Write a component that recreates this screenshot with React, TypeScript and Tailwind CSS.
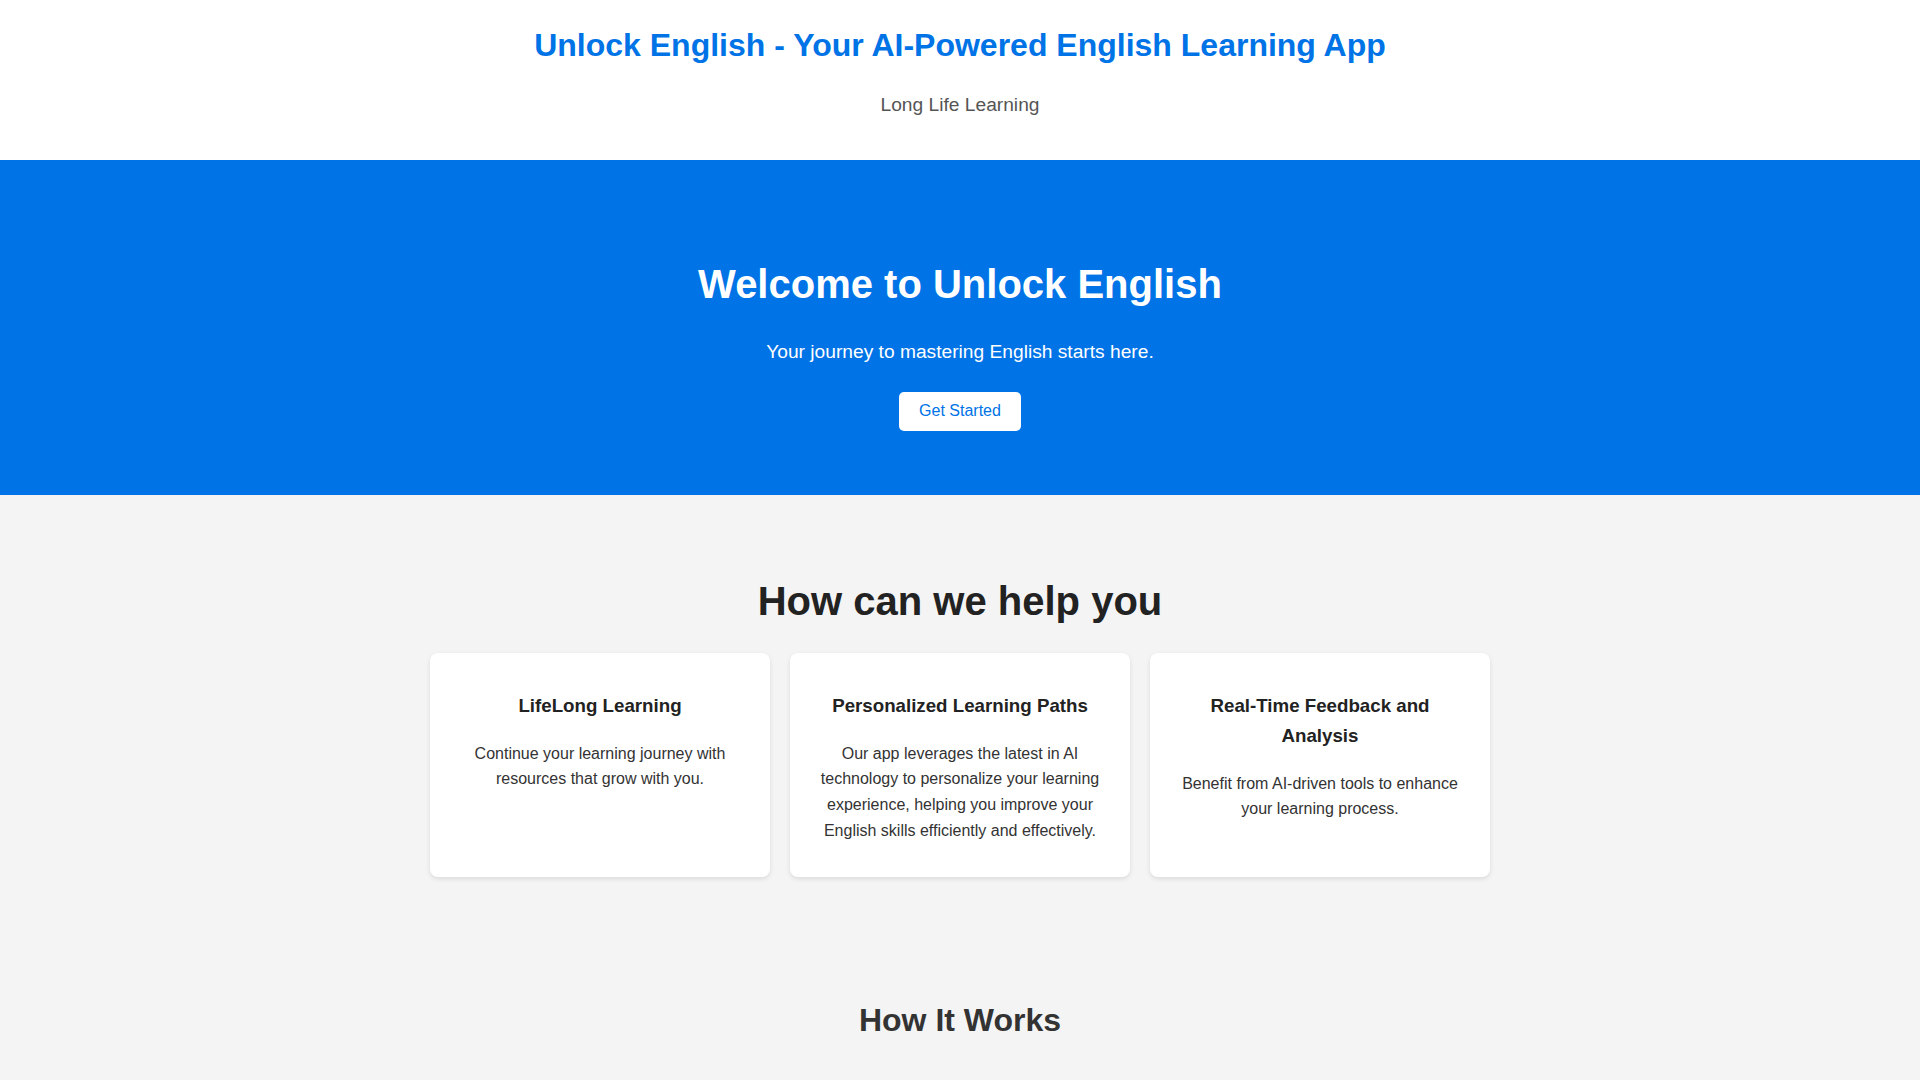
import React from "react";

const cards = [
  {
    title: "LifeLong Learning",
    text: "Continue your learning journey with resources that grow with you.",
  },
  {
    title: "Personalized Learning Paths",
    text: "Our app leverages the latest in AI technology to personalize your learning experience, helping you improve your English skills efficiently and effectively.",
  },
  {
    title: "Real-Time Feedback and Analysis",
    text: "Benefit from AI-driven tools to enhance your learning process.",
  },
];

export default function App() {
  return (
    <div
      className="min-h-screen bg-[#f4f4f4] text-[#333] leading-[1.6]"
      style={{ fontFamily: '"Liberation Sans", Arial, sans-serif' }}
    >
      <header className="bg-white text-center pt-[20px] pb-[20px]">
        <h1 className="text-[32px] font-bold text-[#0073e6] m-0 leading-[1.6]">
          Unlock English - Your AI-Powered English Learning App
        </h1>
        <p className="text-[19.2px] text-[#555] mt-[19px] mb-[19px]">Long Life Learning</p>
      </header>

      <section className="bg-[#0073e6] text-white text-center pt-[92px] pb-[64px]">
        <h2 className="text-[40px] font-bold leading-[1.6] m-0">Welcome to Unlock English</h2>
        <p className="text-[19.2px] mt-[21.5px] mb-[24px]">Your journey to mastering English starts here.</p>
        <div className="flex justify-center">
          <button className="bg-white text-[#0073e6] text-[16px] px-[20px] py-[10px] rounded-[5px] leading-[1.15] whitespace-nowrap">
            Get Started
          </button>
        </div>
      </section>

      <section className="text-center pt-[74px] pb-[20px]">
        <h2 className="text-[40px] font-bold text-[#222] leading-[1.6] m-0 mb-[20px]">
          How can we help you
        </h2>
        <div className="flex justify-center gap-[20px]">
          {cards.map((c) => (
            <div
              key={c.title}
              className="w-[340px] bg-white rounded-[8px] shadow-[0_2px_5px_rgba(0,0,0,0.1)] px-[20px] pt-[21px] pb-[18px]"
            >
              <h3 className="text-[18.72px] font-bold text-[#222] leading-[1.6] mt-[17.8px] mb-[19.5px]">
                {c.title}
              </h3>
              <p className="text-[16px] text-[#333] leading-[1.6] mb-[16px]">{c.text}</p>
            </div>
          ))}
        </div>
      </section>

      <section className="text-center pt-[98px] pb-[40px]">
        <h2 className="text-[32px] font-bold text-[#333] leading-[1.6] m-0">How It Works</h2>
      </section>
    </div>
  );
}
